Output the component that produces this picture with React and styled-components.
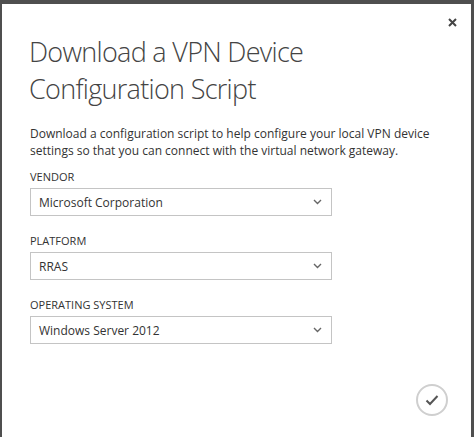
import React from "react";
import styled, { createGlobalStyle } from "styled-components";

const GlobalStyle = createGlobalStyle`
  html, body {
    margin: 0;
    padding: 0;
    background: #fff;
  }
  * {
    box-sizing: border-box;
  }
`;

const Frame = styled.div`
  width: 474px;
  height: 437px;
  padding: 4px 3px 0 2px;
  background: #4f4f4f;
  font-family: "Open Sans", "Noto Sans", sans-serif;
`;

const Dialog = styled.div`
  position: relative;
  height: 100%;
  background: #fff;
  padding: 29px 23px 0 28px;
  display: flex;
  flex-direction: column;
`;

const CloseButton = styled.button`
  position: absolute;
  top: 12px;
  right: 12px;
  width: 13px;
  height: 13px;
  padding: 0;
  border: 0;
  background: none;
  display: flex;
  align-items: center;
  justify-content: center;
  cursor: pointer;
`;

const Title = styled.h1`
  margin: 0 0 0 -1px;
  font-weight: 300;
  font-size: 27px;
  letter-spacing: -0.7px;
  line-height: 37px;
  color: #444;
  width: 300px;
`;

const Description = styled.p`
  margin: 18px 0 11px;
  font-size: 12px;
  line-height: 17px;
  color: #333;
`;

const Fields = styled.div`
  display: flex;
  flex-direction: column;
  gap: 18px;
`;

const Field = styled.div`
  display: flex;
  flex-direction: column;
  gap: 4px;
`;

const Label = styled.label`
  font-size: 11px;
  line-height: 14px;
  color: #333;
  text-transform: uppercase;
`;

const SelectBox = styled.div`
  width: 302px;
  height: 28px;
  border: 1px solid #c4c4c4;
  display: flex;
  align-items: center;
  justify-content: space-between;
  padding: 0 9px 0 8px;
  font-size: 12px;
  color: #333;
`;

const Footer = styled.div`
  margin-top: 40px;
  display: flex;
  justify-content: flex-end;
`;

const ConfirmButton = styled.button`
  width: 32px;
  height: 32px;
  border-radius: 50%;
  border: 2px solid #cfcfcf;
  background: #fff;
  padding: 0;
  display: flex;
  align-items: center;
  justify-content: center;
  cursor: pointer;
`;

const Chevron = () => (
  <svg width="9" height="6" viewBox="0 0 9 6">
    <path d="M1 1l3.5 3.5L8 1" fill="none" stroke="#666" strokeWidth="1.4" />
  </svg>
);

const fields = [
  { label: "Vendor", value: "Microsoft Corporation" },
  { label: "Platform", value: "RRAS" },
  { label: "Operating System", value: "Windows Server 2012" },
];

const App = () => {
  return (
    <>
      <GlobalStyle />
      <Frame>
        <Dialog>
          <CloseButton aria-label="Close">
            <svg width="9" height="9" viewBox="0 0 9 9">
              <path d="M1 1l7 7M8 1l-7 7" stroke="#444" strokeWidth="2" />
            </svg>
          </CloseButton>

          <Title>Download a VPN Device Configuration Script</Title>

          <Description>
            Download a configuration script to help configure your local VPN
            device settings so that you can connect with the virtual network
            gateway.
          </Description>

          <Fields>
            {fields.map((f) => (
              <Field key={f.label}>
                <Label>{f.label}</Label>
                <SelectBox>
                  <span>{f.value}</span>
                  <Chevron />
                </SelectBox>
              </Field>
            ))}
          </Fields>

          <Footer>
            <ConfirmButton aria-label="OK">
              <svg width="14" height="12" viewBox="0 0 14 12">
                <path
                  d="M1.5 6.5l3.5 3.5 7.5-8"
                  fill="none"
                  stroke="#555"
                  strokeWidth="2"
                />
              </svg>
            </ConfirmButton>
          </Footer>
        </Dialog>
      </Frame>
    </>
  );
};

export default App;
